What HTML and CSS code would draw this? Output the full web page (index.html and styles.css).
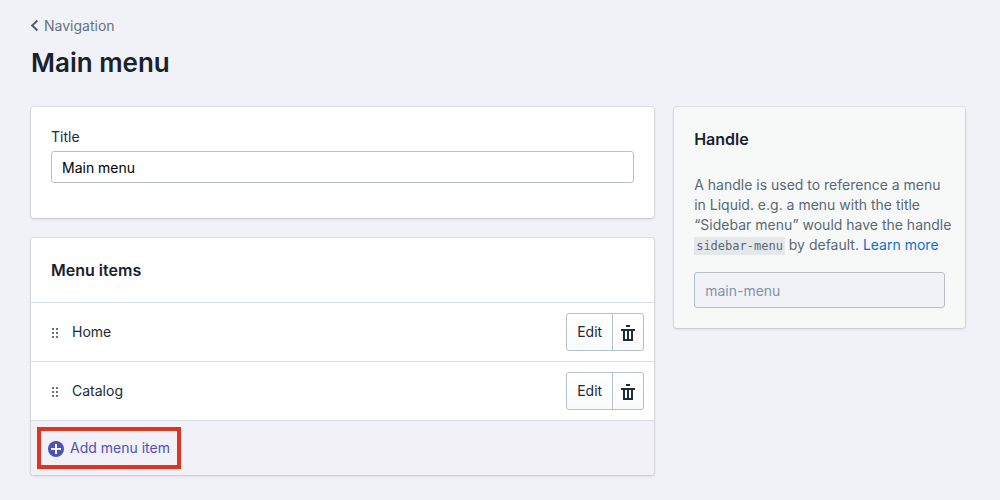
FILE: index.html
```
<!DOCTYPE html>
<html lang="en">
<head>
    <meta charset="UTF-8">
    <meta name="viewport" content="width=device-width, initial-scale=1.0">
    <title>Main menu</title>
    <link rel="stylesheet" href="styles.css">
</head>
<body>
    <header class="page-header">
        <a class="breadcrumb" href="#">
            <svg width="8" height="14" viewBox="0 0 8 14" fill="none" stroke="currentColor" stroke-width="2"><path d="M6.4 1.6 1.2 6.5 6.4 11.4"/></svg>
            Navigation
        </a>
        <h1>Main menu</h1>
    </header>

    <main class="layout">
        <div class="primary">
            <section class="card title-card">
                <label for="title">Title</label>
                <input id="title" class="text-field" type="text" value="Main menu">
            </section>

            <section class="card">
                <h2 class="items-heading">Menu items</h2>
                <ul class="items">
                    <li class="item">
                        <svg class="drag" width="6" height="12" viewBox="0 -2 6 12" fill="currentColor"><path d="M0 0h2v2H0zM4 0h2v2H4zM0 4h2v2H0zM4 4h2v2H4zM0 8h2v2H0zM4 8h2v2H4z"/></svg>
                        <span class="item-name">Home</span>
                        <div class="button-group">
                            <button type="button">Edit</button>
                            <button type="button" class="delete" aria-label="Delete Home">
                                <svg width="14" height="18" viewBox="0 -2 14 18" fill="none" stroke="currentColor" stroke-width="2"><path d="M5 1h4M0 5h14M3 5v10h8V5M7 5v10"/></svg>
                            </button>
                        </div>
                    </li>
                    <li class="item">
                        <svg class="drag" width="6" height="12" viewBox="0 -2 6 12" fill="currentColor"><path d="M0 0h2v2H0zM4 0h2v2H4zM0 4h2v2H0zM4 4h2v2H4zM0 8h2v2H0zM4 8h2v2H4z"/></svg>
                        <span class="item-name">Catalog</span>
                        <div class="button-group">
                            <button type="button">Edit</button>
                            <button type="button" class="delete" aria-label="Delete Catalog">
                                <svg width="14" height="18" viewBox="0 -2 14 18" fill="none" stroke="currentColor" stroke-width="2"><path d="M5 1h4M0 5h14M3 5v10h8V5M7 5v10"/></svg>
                            </button>
                        </div>
                    </li>
                </ul>
                <div class="items-footer">
                    <button type="button" class="add-item">
                        <svg width="16" height="18" viewBox="0 -2 16 18"><circle cx="8" cy="8" r="8" fill="currentColor"/><path d="M8 3v10M3 8h10" stroke="#fff" stroke-width="2"/></svg>
                        Add menu item
                    </button>
                </div>
            </section>
        </div>

        <aside class="card handle-card">
            <h2><label for="handle">Handle</label></h2>
            <p>A handle is used to reference a menu in Liquid. e.g. a menu with the title “Sidebar menu” would have the handle <code>sidebar-menu</code> by default. <a href="#">Learn more</a></p>
            <input id="handle" class="text-field" type="text" value="main-menu" disabled>
        </aside>
    </main>
</body>
</html>
```
FILE: styles.css
```
* {
    box-sizing: border-box;
}

body {
    margin: 0;
    padding: 16px 35px 24px 31px;
    background: #f1f2f7;
    color: #212b36;
    font-family: Inter, sans-serif;
    font-size: 14px;
    line-height: 20px;
}

h1,
h2,
p,
ul {
    margin: 0;
    padding: 0;
}

h1 {
    margin-top: 9px;
    color: #19212a;
    font-size: 26px;
    font-weight: 600;
    line-height: 36px;
}

h2 {
    color: #19212a;
    font-size: 16px;
    font-weight: 600;
    line-height: 24px;
}

svg {
    display: block;
    flex: none;
}

button,
input {
    font: inherit;
}

.page-header {
    margin-bottom: 26px;
}

.breadcrumb {
    display: flex;
    align-items: center;
    gap: 5px;
    width: max-content;
    color: #637381;
    text-decoration: none;
}

.breadcrumb svg {
    color: #4f5f6e;
}

.layout {
    display: grid;
    grid-template-columns: 15fr 7fr;
    gap: 20px;
    align-items: start;
}

.primary {
    display: grid;
    gap: 20px;
}

.card {
    overflow: hidden;
    background: #fff;
    border-radius: 3px;
    box-shadow: 0 0 0 1px rgba(63, 63, 68, 0.08), 0 1px 3px rgba(63, 63, 68, 0.2);
}

.title-card {
    padding: 20px 20px 35px;
}

.title-card label {
    display: block;
    margin-bottom: 4px;
}

.text-field {
    display: block;
    width: 100%;
    height: 32px;
    padding: 0 10px;
    border: 1px solid #b4bfcc;
    border-radius: 3px;
    background: #fff;
    color: #000;
}

.text-field:disabled {
    height: 36px;
    background: #f1f2f7;
    color: #8593a1;
}

/* Menu items */
.items-heading {
    padding: 20px;
}

.items {
    list-style: none;
}

.item {
    display: flex;
    align-items: center;
    padding: 10px 10px 10px 21px;
    border-top: 1px solid #d8dce3;
}

.drag {
    margin-right: 14px;
    color: #637381;
}

.item-name {
    flex: 1;
}

.button-group {
    display: flex;
}

.button-group button {
    display: flex;
    align-items: center;
    justify-content: center;
    height: 38px;
    width: 47px;
    padding: 0;
    border: 1px solid #b4c0cc;
    border-radius: 3px 0 0 3px;
    background: linear-gradient(#fff, #f9fafb);
    color: #212b36;
    cursor: pointer;
}

.button-group .delete {
    width: 32px;
    margin-left: -1px;
    border-radius: 0 3px 3px 0;
}

.items-footer {
    padding: 6px;
    border-top: 1px solid #d8dce3;
    background: #f1f1f7;
}

.add-item {
    display: flex;
    align-items: center;
    gap: 6px;
    height: 42px;
    padding: 0 7px;
    border: 4px solid #dc3526;
    background: transparent;
    color: #4b52b8;
    cursor: pointer;
}

/* Handle sidebar */
.handle-card {
    padding: 20px;
    background: #f7f9f9;
}

.handle-card p {
    margin: 24px -8px 17px 0;
    color: #5a6875;
}

.handle-card code {
    padding: 2px;
    background: #e4e8eb;
    font-family: "DejaVu Sans Mono", monospace;
    font-size: 12px;
    line-height: 16px;
}

.handle-card a {
    color: #1070ca;
    text-decoration: none;
}
```
